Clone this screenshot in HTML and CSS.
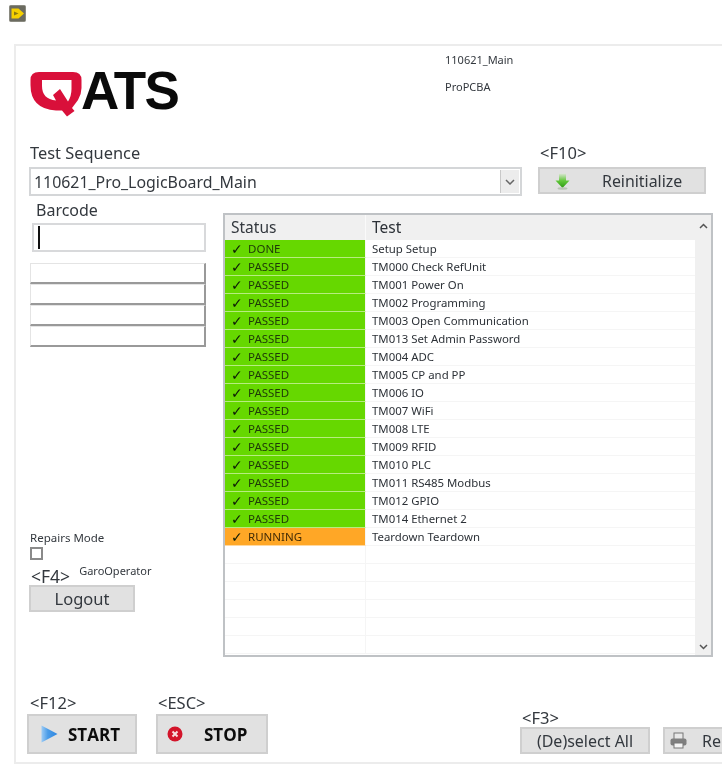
FILE: index.html
```html
<!DOCTYPE html>
<html lang="en">
<head>
<meta charset="utf-8">
<title>QATS</title>
<link rel="stylesheet" href="styles.css">
</head>
<body>
<div class="titlebar">
  <svg class="app-icon" width="17" height="17" viewBox="0 0 17 17"><rect x="0.5" y="0.5" width="16" height="16" rx="1" fill="#6b6b60" stroke="#8a8a80"/><path d="M2.5 3.5H9.5L15 8.5L9.5 13.5H2.5Z" fill="#f5d000"/><path d="M5 6.5L9.5 8.5L5 10.5Z" fill="#8a7a10"/></svg>
</div>
<main class="frame">
  <header class="head">
    <div class="logo">
      <svg class="logo-q" width="52" height="46" viewBox="30 72 52 46"><path fill-rule="evenodd" fill="#d9103a" d="M39 72H73Q81.500 72 81.500 80V88Q81.500 94 78 100L72 108L74.500 111L67 116.500L62 110.500H56Q30.500 109 30.500 85V80Q30.500 72 39 72ZM42 80V86Q42 99 56 100.500L53 95L60 89L68 101.500Q71.500 96 71.500 89V80Z"/></svg>
      <span class="logo-ats">ATS</span>
    </div>
    <div class="meta">
      <div class="meta-line">110621_Main</div>
      <div class="meta-line">ProPCBA</div>
    </div>
  </header>

  <section class="sequence">
    <div class="seq-main">
      <div class="label label-seq">Test Sequence</div>
      <div class="select">
        <span class="select-text">110621_Pro_LogicBoard_Main</span>
        <span class="select-arrow"><svg width="10" height="6" viewBox="0 0 10 6"><path d="M1 1L5 5L9 1" fill="none" stroke="#666" stroke-width="1.500"/></svg></span>
      </div>
    </div>
    <div class="seq-side">
      <div class="label key-f10">&lt;F10&gt;</div>
      <button class="btn btn-reinit" type="button">
        <svg width="15" height="17" viewBox="0 0 15 17"><defs><linearGradient id="arrowFill" x1="0" y1="0" x2="0" y2="1"><stop offset="0" stop-color="#dce6d6"/><stop offset="0.5" stop-color="#62c83a"/><stop offset="1" stop-color="#2c9a12"/></linearGradient></defs><path d="M4 0.500H11V7.500H14.500L7.500 15L0.500 7.500H4Z" fill="url(#arrowFill)"/><ellipse cx="7.500" cy="15.500" rx="5" ry="1.200" fill="#b9c4b4"/></svg>
        <span>Reinitialize</span>
      </button>
    </div>
  </section>

  <section class="content">
    <aside class="side">
      <div class="label barcode-label">Barcode</div>
      <div class="barcode"><span class="caret"></span></div>
      <div class="stack">
        <div class="stack-box"></div>
        <div class="stack-box"></div>
        <div class="stack-box"></div>
        <div class="stack-box"></div>
      </div>
      <div class="side-lower">
        <div class="small-label">Repairs Mode</div>
        <div class="checkbox"></div>
        <div class="login-row">
          <span class="label key-f4">&lt;F4&gt;</span>
          <span class="operator">GaroOperator</span>
        </div>
        <button class="btn btn-logout" type="button">Logout</button>
      </div>
    </aside>

    <div class="table">
      <div class="table-main">
        <div class="row row-head"><div class="cell-status">Status</div><div class="cell-test">Test</div></div>
        <div class="row"><div class="cell-status ok"><i>✓</i>DONE</div><div class="cell-test">Setup Setup</div></div>
        <div class="row"><div class="cell-status ok"><i>✓</i>PASSED</div><div class="cell-test">TM000 Check RefUnit</div></div>
        <div class="row"><div class="cell-status ok"><i>✓</i>PASSED</div><div class="cell-test">TM001 Power On</div></div>
        <div class="row"><div class="cell-status ok"><i>✓</i>PASSED</div><div class="cell-test">TM002 Programming</div></div>
        <div class="row"><div class="cell-status ok"><i>✓</i>PASSED</div><div class="cell-test">TM003 Open Communication</div></div>
        <div class="row"><div class="cell-status ok"><i>✓</i>PASSED</div><div class="cell-test">TM013 Set Admin Password</div></div>
        <div class="row"><div class="cell-status ok"><i>✓</i>PASSED</div><div class="cell-test">TM004 ADC</div></div>
        <div class="row"><div class="cell-status ok"><i>✓</i>PASSED</div><div class="cell-test">TM005 CP and PP</div></div>
        <div class="row"><div class="cell-status ok"><i>✓</i>PASSED</div><div class="cell-test">TM006 IO</div></div>
        <div class="row"><div class="cell-status ok"><i>✓</i>PASSED</div><div class="cell-test">TM007 WiFi</div></div>
        <div class="row"><div class="cell-status ok"><i>✓</i>PASSED</div><div class="cell-test">TM008 LTE</div></div>
        <div class="row"><div class="cell-status ok"><i>✓</i>PASSED</div><div class="cell-test">TM009 RFID</div></div>
        <div class="row"><div class="cell-status ok"><i>✓</i>PASSED</div><div class="cell-test">TM010 PLC</div></div>
        <div class="row"><div class="cell-status ok"><i>✓</i>PASSED</div><div class="cell-test">TM011 RS485 Modbus</div></div>
        <div class="row"><div class="cell-status ok"><i>✓</i>PASSED</div><div class="cell-test">TM012 GPIO</div></div>
        <div class="row"><div class="cell-status ok"><i>✓</i>PASSED</div><div class="cell-test">TM014 Ethernet 2</div></div>
        <div class="row"><div class="cell-status run"><i>✓</i>RUNNING</div><div class="cell-test">Teardown Teardown</div></div>
        <div class="row"><div class="cell-status"></div><div class="cell-test"></div></div>
        <div class="row"><div class="cell-status"></div><div class="cell-test"></div></div>
        <div class="row"><div class="cell-status"></div><div class="cell-test"></div></div>
        <div class="row"><div class="cell-status"></div><div class="cell-test"></div></div>
        <div class="row"><div class="cell-status"></div><div class="cell-test"></div></div>
        <div class="row"><div class="cell-status"></div><div class="cell-test"></div></div>
      </div>
      <div class="scrollbar">
        <svg width="9" height="6" viewBox="0 0 9 6"><path d="M1 5L4.500 1.500L8 5" fill="none" stroke="#555" stroke-width="1.500"/></svg>
        <svg width="9" height="6" viewBox="0 0 9 6"><path d="M1 1L4.500 4.500L8 1" fill="none" stroke="#555" stroke-width="1.500"/></svg>
      </div>
    </div>
  </section>

  <footer class="foot">
    <div class="foot-group">
      <div class="label key-small">&lt;F12&gt;</div>
      <button class="btn btn-big btn-start" type="button">
        <svg width="17" height="18" viewBox="0 0 17 18"><defs><linearGradient id="playFill" x1="0" y1="0" x2="1" y2="0"><stop offset="0" stop-color="#9ccbf5"/><stop offset="0.4" stop-color="#4a9ce8"/><stop offset="1" stop-color="#2f86e0"/></linearGradient></defs><path d="M0.500 0.500L16.500 9L0.500 17.500Z" fill="url(#playFill)"/></svg>
        <span>START</span>
      </button>
    </div>
    <div class="foot-group">
      <div class="label key-small key-esc">&lt;ESC&gt;</div>
      <button class="btn btn-big btn-stop" type="button">
        <svg width="16" height="16" viewBox="0 0 16 16"><circle cx="8" cy="8" r="7.500" fill="#d3142a"/><path d="M5.500 5.500L10.500 10.500M10.500 5.500L5.500 10.500" stroke="#f6dede" stroke-width="2"/></svg>
        <span>STOP</span>
      </button>
    </div>
    <div class="foot-group foot-select">
      <div class="label key-small">&lt;F3&gt;</div>
      <button class="btn btn-select" type="button">(De)select All</button>
    </div>
    <button class="btn btn-report" type="button">
      <svg width="17" height="17" viewBox="0 0 17 17"><rect x="4" y="1" width="9" height="7" fill="#e8e8e8" stroke="#777"/><rect x="0.500" y="6.500" width="16" height="7" rx="2" fill="#7f7f7f"/><rect x="4" y="11" width="9" height="5" fill="#f4f4f4" stroke="#777"/></svg>
      <span>Re</span>
    </button>
  </footer>
</main>
</body>
</html>
```

FILE: styles.css
```css
* { box-sizing: border-box; }
html, body { margin: 0; padding: 0; width: 722px; height: 779px; overflow: hidden; background: #fff; }
body { font-family: "Noto Sans", "Open Sans", sans-serif; color: #33383e; filter: blur(0.35px); }

.titlebar { height: 44px; padding: 5px 0 0 9px; }
.app-icon { display: block; }

.frame { margin-left: 14px; width: 760px; height: 720px; border: 2px solid #ececec; border-right: 0; display: flex; flex-direction: column; }

.head { height: 98px; display: flex; }
.logo { display: flex; align-items: flex-start; width: 429px; padding: 26px 0 0 14px; }
.logo-q { display: block; flex: none; }
.logo-ats { font-family: "Liberation Sans", sans-serif; font-weight: 700; font-size: 53px; line-height: 38px; letter-spacing: -1.600px; color: #0a0a0a; margin-left: -1px; }
.meta { padding-top: 5px; font-size: 11px; line-height: 18px; }
.meta-line { margin-bottom: 9px; }

.label { font-size: 16px; line-height: 23px; color: #33383e; }
.label-seq { font-size: 16.400px; line-height: 17px; margin-bottom: 6px; padding-left: 1px; }

.sequence { display: flex; padding-left: 13px; }
.seq-main { width: 493px; }
.select { height: 29px; display: flex; border: 2px solid #d4d6d8; background: #fff; }
.select-text { flex: 1; font-size: 15.900px; line-height: 26px; padding-left: 3px; }
.select-arrow { width: 19px; margin: 1px; background: #ececec; border-left: 1px solid #c8c8c8; display: flex; align-items: center; justify-content: center; }
.seq-side { margin-left: 16px; }
.key-f10 { padding-left: 2px; line-height: 17px; margin-bottom: 6px; font-size: 16.500px; }

.btn { display: flex; align-items: center; margin: 0; padding: 0; background: #e1e1e1; border: 2px solid #cfcfcf; font-family: inherit; color: #33383e; }
.btn-reinit { width: 168px; height: 27px; margin-top: 1px; padding: 1px 0 0 15px; font-size: 15.900px; }
.btn-reinit span { margin-left: 32px; }

.content { display: flex; height: 461px; padding-left: 13px; }
.side { width: 194px; display: flex; flex-direction: column; }
.barcode-label { line-height: 29px; height: 27px; padding-left: 7px; }
.barcode { width: 174px; height: 29px; margin-left: 3px; border: 2px solid #d8d9db; padding: 1px 0 0 4px; background: #fff; }
.caret { display: block; width: 2px; height: 23px; background: #111; }
.stack { width: 176px; margin: 11px 0 0 1px; }
.stack-box { height: 21px; border: 1px solid #e4e4e4; border-right: 2px solid #999; border-bottom: 2px solid #999; }
.side-lower { margin-top: auto; padding-bottom: 45px; }
.small-label { font-size: 11.500px; line-height: 16px; padding-left: 1px; }
.checkbox { width: 13px; height: 13px; margin: 1px 0 1px 1px; border: 2px solid #8a8a8a; }
.login-row { display: flex; align-items: flex-start; height: 24px; padding-left: 2px; }
.key-f4 { font-size: 17.500px; line-height: 24px; margin-top: 3px; }
.operator { font-size: 11px; line-height: 16px; margin: 2px 0 0 9px; }
.btn-logout { width: 106px; height: 27px; justify-content: center; font-size: 16.500px; }

.table { width: 490px; height: 444px; margin-top: 17px; border: 2px solid #bfc2c5; display: flex; }
.table-main { width: 470px; }
.row { display: grid; grid-template-columns: 141px 1fr; height: 18px; }
.cell-status { display: flex; align-items: center; font-size: 11.500px; border-bottom: 1px solid #f5f5f5; border-right: 1px solid #f5f5f5; }
.cell-test { font-size: 11.400px; line-height: 17px; padding-left: 6px; border-bottom: 1px solid #f5f5f5; color: #2c3137; white-space: nowrap; }
.cell-status i { font-style: normal; font-weight: 700; font-family: "DejaVu Sans", sans-serif; font-size: 14px; width: 23px; padding-left: 6px; color: #0c1a06; }
.ok { background: #66d800; border-bottom-color: #b7ec80; color: #1f3a08; }
.run { background: #ffa726; border-bottom-color: #ffd8a0; color: #422b06; }
.row-head { height: 25px; background: #f0f0f0; }
.row-head .cell-status, .row-head .cell-test { font-size: 15.500px; line-height: 25px; border-bottom: 0; }
.row-head .cell-status { padding-left: 6px; border-right: 1px solid #fafafa; }
.scrollbar { flex: 1; background: #f0f0f0; display: flex; flex-direction: column; align-items: center; justify-content: space-between; padding: 8px 0 5px; }

.foot { flex: 1; display: flex; align-items: flex-end; padding: 0 0 8px 11px; }
.foot-group { display: flex; flex-direction: column; }
.key-small { padding-left: 3px; line-height: 20px; font-size: 16.500px; }
.key-esc { padding-left: 2px; }
.btn-big { height: 40px; font-family: "Open Sans", sans-serif; font-weight: 700; font-size: 17px; color: #0c0c0c; }
.btn-start { width: 110px; margin-top: 1px; padding-left: 12px; }
.btn-start span { margin-left: 10px; }
.btn-stop { width: 112px; margin: 1px 0 0 19px; padding-left: 9px; }
.btn-stop span { margin-left: 21px; }
.foot-group:nth-child(2) .key-small { margin-left: 19px; }
.foot-select { margin-left: 252px; }
.foot-select .key-small { line-height: 18px; padding-left: 2px; }
.btn-select { width: 130px; height: 27px; justify-content: center; font-size: 16px; }
.btn-report { width: 120px; height: 27px; margin-left: 13px; padding-left: 5px; font-size: 16px; }
.btn-report span { margin-left: 15px; }
```
